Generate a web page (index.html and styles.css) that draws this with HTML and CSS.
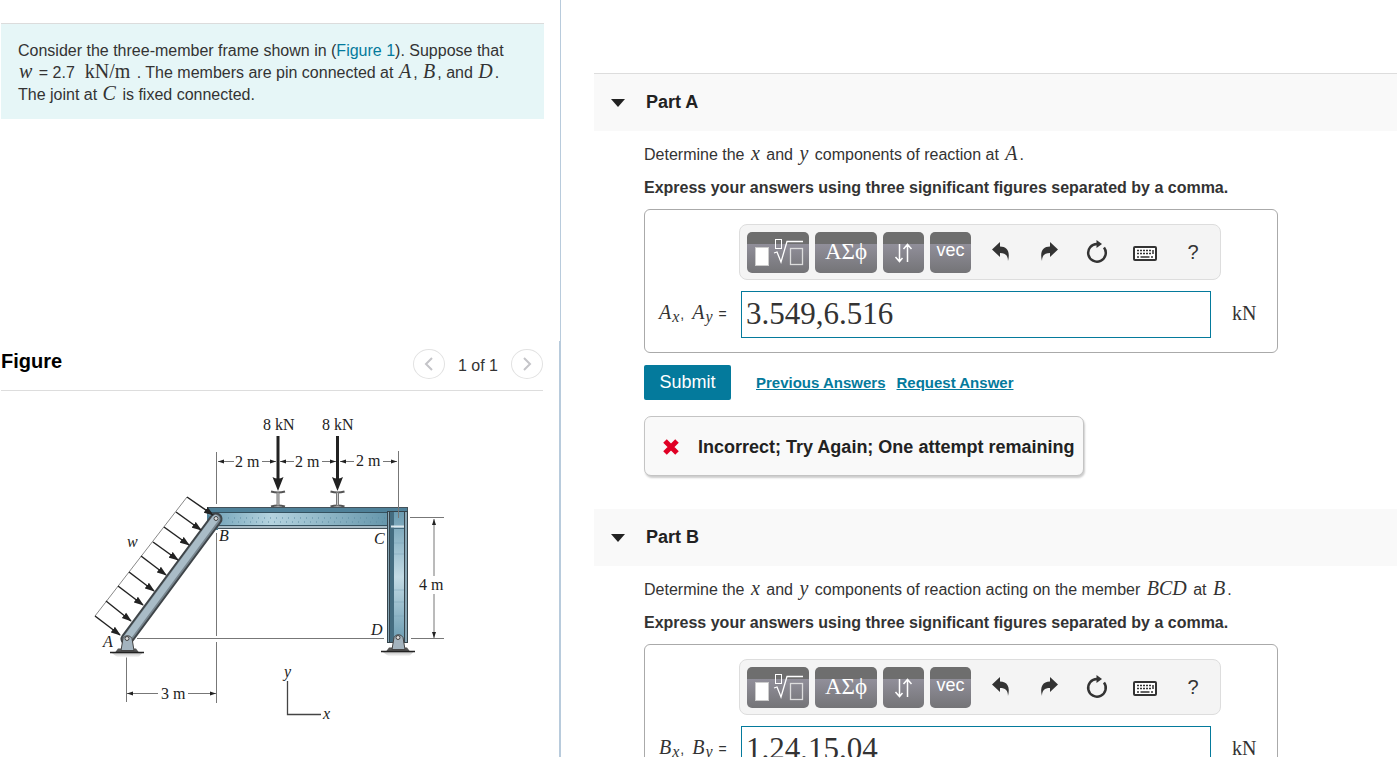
FILE: index.html
```html
<!DOCTYPE html>
<html lang="en">

<head>
  <meta charset="utf-8">
  <meta name="viewport" content="width=device-width, initial-scale=1.0">
  <title>Three-member frame</title>
  <link rel="stylesheet" href="styles.css">
</head>

<body>
  <!-- icons shared by both toolbars -->
  <svg class="defs" width="0" height="0" aria-hidden="true">
    <symbol id="i-template" viewBox="0 0 62 41">
      <rect x="8.500" y="15.500" width="13" height="18" fill="#fff" stroke="#ccc"/>
      <rect x="28.500" y="7.500" width="6" height="9" fill="none" stroke="#fff"/>
      <path d="M27 21l3-1 4 10 6-20.500h16" fill="none" stroke="#fff" stroke-width="1.300"/>
      <rect x="43.500" y="16.500" width="12" height="16" fill="none" stroke="#ddd" stroke-width="1.300"/>
    </symbol>
    <symbol id="i-updown" viewBox="0 0 42 41">
      <path d="M16.500 12v17M12.500 25l4 4.500 3-3.500M24.500 30V13M20.500 17l4-4.500 4 4.500" fill="none" stroke="#fff" stroke-width="1.500"/>
    </symbol>
    <symbol id="i-undo" viewBox="0 0 24 24">
      <path d="M3 9.500L11 2v4.500c7 0 10.500 5 8 14.500 0-5.500-2.500-8-8-8V17z" fill="#333"/>
    </symbol>
    <symbol id="i-redo" viewBox="0 0 24 24">
      <path d="M21 9.500L13 2v4.500c-7 0-10.500 5-8 14.500 0-5.500 2.500-8 8-8V17z" fill="#333"/>
    </symbol>
    <symbol id="i-reset" viewBox="0 0 24 24">
      <path d="M19 7.500a8.800 8.800 0 1 1-7-3.500" fill="none" stroke="#333" stroke-width="2.500"/>
      <path d="M11.500 0l5.500 4-5.500 4z" fill="#333"/>
    </symbol>
    <symbol id="i-keyboard" viewBox="0 0 24 24">
      <rect x="1" y="7" width="22" height="13" rx="1" fill="#fff" stroke="#333" stroke-width="2"/>
      <path d="M4 10.500h15M4 13.500h15M4 17h2M18 17h2" stroke="#333" stroke-width="1.500" stroke-dasharray="2 1"/>
      <path d="M7.500 17h9M20 10v4" stroke="#333" stroke-width="1.500"/>
    </symbol>
  </svg>

  <div class="page">
    <div class="left">
      <div class="intro">
        <div class="problem">
          Consider the three-member frame shown in (<a href="#figure">Figure 1</a>). Suppose that<br>
          <i class="math">w</i> = 2.7 &nbsp;<span class="math">kN/m</span> . The members are pin connected at <i class="math">A</i>, <i class="math">B</i>, and <i class="math">D</i>.<br>
          The joint at <i class="math">C</i> is fixed connected.
        </div>
      </div>

      <div class="figure" id="figure">
        <div class="figure-head">
          <h2>Figure</h2>
          <div class="pager">
            <button class="round" aria-label="Previous figure"><svg width="12" height="16" viewBox="0 0 12 16"><path d="M9 2L3 8l6 6"/></svg></button>
            <span>1 of 1</span>
            <button class="round" aria-label="Next figure"><svg width="12" height="16" viewBox="0 0 12 16"><path d="M3 2l6 6-6 6"/></svg></button>
          </div>
        </div>

        <svg class="diagram" width="370" height="320" viewBox="90 410 370 320" role="img" aria-label="Frame ABCD with loads">
          <defs>
            <marker id="head" markerUnits="userSpaceOnUse" markerWidth="10" markerHeight="8" refX="9" refY="4" orient="auto"><path d="M0 0.500L10 4 0 7.500z" fill="#222"/></marker>
            <marker id="dim" markerUnits="userSpaceOnUse" markerWidth="7" markerHeight="5" refX="6" refY="2.500" orient="auto-start-reverse"><path d="M0 0.500L6 2.500 0 4.500z" fill="#222"/></marker>
            <linearGradient id="web">
              <stop offset="0" stop-color="#6fa0b6"/>
              <stop offset="0.350" stop-color="#b4d3df"/>
              <stop offset="1" stop-color="#6596ab"/>
            </linearGradient>
            <linearGradient id="col" x1="0" y1="0" x2="0" y2="1">
              <stop offset="0" stop-color="#6a9bb1"/>
              <stop offset="0.500" stop-color="#c3dbe5"/>
              <stop offset="1" stop-color="#6a9bb1"/>
            </linearGradient>
            <linearGradient id="shade" x1="0" y1="0" x2="0" y2="1">
              <stop offset="0" stop-color="#bbb"/>
              <stop offset="1" stop-color="#fff"/>
            </linearGradient>
            <g id="ibeam">
              <path d="M-7 1.500q7 2 14 0M-7 16.500q7-2 14 0" fill="none" stroke="#555" stroke-width="2"/>
              <path d="M0 2v14" stroke="#777" stroke-width="3"/>
              <path d="M0 3v12" stroke="#ccc"/>
            </g>
            <g id="support">
              <path d="M-16 14h32l-5 5h-20z" fill="url(#shade)"/>
              <path d="M-12 14l3-4h18l3 4z" fill="#555"/>
              <path d="M-6 12l2-12a5 5 0 0 1 9 0l2 12z" fill="#a3b3be" stroke="#444"/>
              <path d="M-17 14h34" stroke="#222" stroke-width="1.500"/>
              <circle r="2" fill="#ddd" stroke="#444"/>
            </g>
          </defs>

          <!-- beam BC -->
          <rect x="207.500" y="507.500" width="200" height="21" fill="#a9bdc7" stroke="#44525a"/>
          <rect x="208" y="508" width="199" height="4" fill="#4f8199"/>
          <rect x="208" y="513" width="180" height="12" fill="url(#web)"/>
          <path d="M228 518h158M232 522h154" stroke="#5c8ba1" stroke-dasharray="1 5"/>
          <path d="M208 512.500h199M214 525.500h173" stroke="#34515f"/>
          <path d="M207 513v10l7 7h4v-5z" fill="#4f8199"/>

          <!-- column CD -->
          <rect x="387.500" y="511.500" width="20" height="131" fill="#8aa7b5" stroke="#34434b"/>
          <rect x="390" y="512" width="4" height="130" fill="#446c80"/>
          <rect x="394" y="512" width="10" height="130" fill="url(#col)"/>
          <path d="M389.500 512v130M404.500 512v130" stroke="#34434b"/>
          <path d="M391 526.500h13" stroke="#dbe8ee" stroke-width="2"/>
          <path d="M391 528.500h13" stroke="#446c80"/>
          <path d="M394 543h10M394 554h10M394 590h10M394 602h10M394 616h10" stroke="#7ba3b5" stroke-width="0.500"/>

          <!-- dimension lines -->
          <g class="thin">
            <path d="M216.500 452v52M216.500 533v103M216.500 642v61M398.500 451v67M126.500 655v47M137 638.500h247M411 638.500h33M410 517.500h34"/>
            <path d="M234 461.500h-16" marker-end="url(#dim)"/>
            <path d="M262 461.500h14" marker-end="url(#dim)"/>
            <path d="M294 461.500h-14" marker-end="url(#dim)"/>
            <path d="M322 461.500h14" marker-end="url(#dim)"/>
            <path d="M354 461.500h-14" marker-end="url(#dim)"/>
            <path d="M383 461.500h14" marker-end="url(#dim)"/>
            <path d="M158 693.500h-31" marker-end="url(#dim)"/>
            <path d="M188 693.500h28" marker-end="url(#dim)"/>
            <path d="M434 576v-57" marker-end="url(#dim)"/>
            <path d="M434 594v44" marker-end="url(#dim)"/>
          </g>

          <!-- point loads -->
          <g stroke="#222" stroke-width="3">
            <path d="M278 436v46M337.500 436v46"/>
          </g>
          <path d="M272.500 477q5.500 3 11 0L278 491zM332 477q5.500 3 11 0L337.500 491z" fill="#222"/>
          <use href="#ibeam" x="278" y="490"/>
          <use href="#ibeam" x="337.500" y="490"/>

          <!-- member AB -->
          <g stroke-linecap="round">
            <path d="M127 639L216 519" stroke="#3f4549" stroke-width="13"/>
            <path d="M127 639L216 519" stroke="#78868f" stroke-width="9"/>
            <path d="M127 638L215.500 518.500" stroke="#a9bcc7" stroke-width="7"/>
          </g>
          <circle cx="216" cy="518.500" r="2" fill="#ddd" stroke="#444"/>
          <use href="#support" x="127" y="638.500"/>
          <use href="#support" x="398" y="637.500"/>

          <!-- distributed load w -->
          <path d="M187 497L95 616" stroke="#888"/>
          <g stroke="#222" stroke-width="1.500">
            <path d="M187 497l26 18" marker-end="url(#head)"/>
            <path d="M176 512l25 18" marker-end="url(#head)"/>
            <path d="M164 527l25 18" marker-end="url(#head)"/>
            <path d="M153 542l25 18" marker-end="url(#head)"/>
            <path d="M141 556l25 19" marker-end="url(#head)"/>
            <path d="M129 572l25 19" marker-end="url(#head)"/>
            <path d="M118 586l25 19" marker-end="url(#head)"/>
            <path d="M106 601l25 20" marker-end="url(#head)"/>
            <path d="M95 616l25 19" marker-end="url(#head)"/>
          </g>

          <path d="M287.500 681v33.500H321" fill="none" stroke="#444" stroke-width="1.300"/>

          <g class="labels">
            <text x="263" y="430">8 kN</text>
            <text x="322" y="430">8 kN</text>
            <text x="235" y="467">2 m</text>
            <text x="295" y="467">2 m</text>
            <text x="356" y="466">2 m</text>
            <text x="419" y="590">4 m</text>
            <text x="161" y="699">3 m</text>
            <g font-style="italic">
              <text x="127" y="547">w</text>
              <text x="103" y="647">A</text>
              <text x="219" y="541">B</text>
              <text x="374" y="544">C</text>
              <text x="371" y="635">D</text>
              <text x="284" y="677">y</text>
              <text x="323" y="719">x</text>
            </g>
          </g>
        </svg>
      </div>
    </div>

    <div class="right">
      <div class="part first">
        <div class="part-head"><span class="caret"></span><h2>Part A</h2></div>
        <div class="part-body">
          <p>Determine the <i class="math">x</i> and <i class="math">y</i> components of reaction at <i class="math">A</i>.</p>
          <p class="hint">Express your answers using three significant figures separated by a comma.</p>
          <div class="answer">
            <div class="toolbar">
              <button class="key wide" aria-label="Templates"><svg width="62" height="41"><use href="#i-template"/></svg></button>
              <button class="key wide greek">ΑΣϕ</button>
              <button class="key" aria-label="Arrows"><svg width="42" height="41"><use href="#i-updown"/></svg></button>
              <button class="key vec">vec</button>
              <div class="tools">
                <button aria-label="Undo"><svg width="24" height="24"><use href="#i-undo"/></svg></button>
                <button aria-label="Redo"><svg width="24" height="24"><use href="#i-redo"/></svg></button>
                <button aria-label="Reset"><svg width="24" height="24"><use href="#i-reset"/></svg></button>
                <button aria-label="Keyboard shortcuts"><svg width="24" height="24"><use href="#i-keyboard"/></svg></button>
                <button>?</button>
              </div>
            </div>
            <label for="ansA"><i>A<sub>x</sub></i><small>,</small> <i>A<sub>y</sub></i> <span>=</span></label>
            <input type="text" id="ansA" value="3.549,6.516">
            <span class="unit">kN</span>
          </div>
          <div class="actions">
            <button class="submit">Submit</button>
            <a href="#">Previous Answers</a>
            <a href="#">Request Answer</a>
          </div>
          <div class="feedback">
            <svg width="18" height="18" viewBox="0 0 18 18"><path d="M3 3l12 12M15 3L3 15" stroke="#e00025" stroke-width="5"/></svg>
            <span>Incorrect; Try Again; One attempt remaining</span>
          </div>
        </div>
      </div>

      <div class="part">
        <div class="part-head"><span class="caret"></span><h2>Part B</h2></div>
        <div class="part-body">
          <p>Determine the <i class="math">x</i> and <i class="math">y</i> components of reaction acting on the member <i class="math">BCD</i> at <i class="math">B</i>.</p>
          <p class="hint">Express your answers using three significant figures separated by a comma.</p>
          <div class="answer">
            <div class="toolbar">
              <button class="key wide" aria-label="Templates"><svg width="62" height="41"><use href="#i-template"/></svg></button>
              <button class="key wide greek">ΑΣϕ</button>
              <button class="key" aria-label="Arrows"><svg width="42" height="41"><use href="#i-updown"/></svg></button>
              <button class="key vec">vec</button>
              <div class="tools">
                <button aria-label="Undo"><svg width="24" height="24"><use href="#i-undo"/></svg></button>
                <button aria-label="Redo"><svg width="24" height="24"><use href="#i-redo"/></svg></button>
                <button aria-label="Reset"><svg width="24" height="24"><use href="#i-reset"/></svg></button>
                <button aria-label="Keyboard shortcuts"><svg width="24" height="24"><use href="#i-keyboard"/></svg></button>
                <button>?</button>
              </div>
            </div>
            <label for="ansB"><i>B<sub>x</sub></i><small>,</small> <i>B<sub>y</sub></i> <span>=</span></label>
            <input type="text" id="ansB" value="1.24,15.04">
            <span class="unit">kN</span>
          </div>
        </div>
      </div>
    </div>
  </div>
</body>

</html>
```

FILE: styles.css
```css
* {
  box-sizing: border-box;
}

body {
  margin: 0;
  font-family: "Liberation Sans", Arial, sans-serif;
  font-size: 16px;
  color: #333;
  background-color: #fff;
}

.defs {
  position: absolute;
}

button {
  border: none;
  padding: 0;
  background: none;
  font-family: inherit;
  cursor: pointer;
}

a {
  color: #047a9c;
}

.page {
  display: flex;
  height: 100vh;
  overflow: hidden;
}

/* left side */
.left {
  width: 561px;
  flex-shrink: 0;
  display: flex;
  flex-direction: column;
}

.intro {
  height: 45%;
  padding: 23px 16px 0 1px;
  border-right: 1px solid #b8cbdc;
}

.problem {
  padding: 16px 16px 14px 17px;
  border-top: 1px solid #dcdcdc;
  background-color: #e6f6f7;
  line-height: 21px;
}

.problem a {
  text-decoration: none;
}

.math {
  margin: 0 2px;
  font-family: "Liberation Serif", "Times New Roman", serif;
  font-size: 20px;
  line-height: 1;
}

.problem .math {
  margin: 0 2px 0 1px;
}

.figure {
  flex: 1;
  padding: 7px 16px 0 1px;
  border-right: 2px solid #b8cbdc;
}

.figure-head {
  display: flex;
  justify-content: space-between;
  align-items: center;
  height: 43px;
  padding-bottom: 9px;
  border-bottom: 1px solid #ddd;
}

h2 {
  margin: 0;
  font-size: 20px;
  color: #000;
}

.figure-head h2 {
  padding-bottom: 6px;
}

.pager {
  display: flex;
  align-items: center;
  gap: 13px;
}

.pager span {
  padding-top: 4px;
}

.round {
  width: 32px;
  height: 30px;
  border: 1px solid #e2e2e2;
  border-radius: 50%;
  display: flex;
  align-items: center;
  justify-content: center;
}

.round path {
  fill: none;
  stroke: #c4c4c8;
  stroke-width: 2;
}

.diagram {
  display: block;
  margin: 19px 0 0 89px;
}

.thin path {
  fill: none;
  stroke: #777;
  stroke-width: 1;
}

.labels {
  font-family: "Liberation Serif", "Times New Roman", serif;
  font-size: 16px;
  fill: #222;
}

/* right side */
.right {
  flex: 1;
  padding: 73px 0 0 33px;
}

.first {
  border-top: 1px solid #ddd;
}

.part-head {
  display: flex;
  align-items: center;
  height: 57px;
  padding-left: 17px;
  background-color: #f9f9f9;
}

.part-head h2 {
  font-size: 18px;
  color: #222;
}

.caret {
  width: 13px;
  margin-right: 21px;
  border-left: 7px solid transparent;
  border-right: 7px solid transparent;
  border-top: 8px solid #222;
}

.part-body {
  padding: 12px 50px 33px;
}

p {
  margin: 0 0 9px;
  line-height: 24px;
}

.hint {
  font-weight: bold;
}

.answer {
  display: grid;
  grid-template-columns: 80px 482px 1fr;
  align-items: center;
  row-gap: 11px;
  max-width: 634px;
  padding: 14px;
  border: 1px solid #aaa;
  border-radius: 6px;
}

.toolbar {
  grid-column: 2;
  display: flex;
  align-items: center;
  gap: 6px;
  height: 56px;
  padding: 0 7px;
  border: 1px solid #ddd;
  border-radius: 8px;
  background-color: #f4f4f4;
}

.key {
  width: 41px;
  height: 41px;
  flex-shrink: 0;
  border-radius: 5px;
  color: #fff;
  background: linear-gradient(#6e6e6e 0, #6e6e6e 12px, #918f9a 12px, #747477 100%);
}

.key svg {
  display: block;
}

.wide {
  width: 62px;
}

.greek {
  font-family: "Liberation Serif", "Times New Roman", serif;
  font-size: 23px;
}

.vec {
  padding-bottom: 4px;
  font-size: 18px;
}

.tools {
  display: flex;
}

.tools button {
  width: 48px;
  height: 41px;
  display: flex;
  align-items: center;
  justify-content: center;
  font-size: 20px;
  color: #333;
}

label {
  grid-column: 1;
  padding-bottom: 3px;
  white-space: nowrap;
  font-family: "Liberation Serif", "Times New Roman", serif;
  font-size: 20px;
}

label i {
  margin-right: 1px;
}

label small {
  margin-right: 3px;
}

label sub {
  margin-left: 1px;
  font-size: 16px;
  line-height: 1;
  vertical-align: -3px;
}

label small,
label span {
  font-family: "Liberation Sans", Arial, sans-serif;
  font-size: 14px;
}

input {
  width: 470px;
  height: 47px;
  margin-left: 2px;
  padding: 0 4px 2px;
  border: 1px solid #047a9c;
  font-family: "Liberation Serif", "Times New Roman", serif;
  font-size: 31px;
  color: #333;
}

.unit {
  font-family: "Liberation Serif", "Times New Roman", serif;
  font-size: 20px;
  padding: 0 0 2px 11px;
}

.actions {
  display: flex;
  align-items: center;
  margin: 12px 0 16px;
}

.actions a {
  margin-right: 11px;
  font-size: 15px;
  font-weight: bold;
}

.submit {
  width: 87px;
  height: 35px;
  margin-right: 25px;
  border-radius: 2px;
  background-color: #047a9c;
  color: #fff;
  font-size: 18px;
}

.feedback {
  display: inline-flex;
  align-items: center;
  gap: 18px;
  height: 60px;
  padding: 2px 9px 0 17px;
  border: 1px solid #c4c4c4;
  border-radius: 7px;
  background-color: #f9f9f9;
  box-shadow: 1px 2px 2px rgba(0, 0, 0, 0.2);
  font-size: 18px;
  font-weight: bold;
  color: #222;
}
```
